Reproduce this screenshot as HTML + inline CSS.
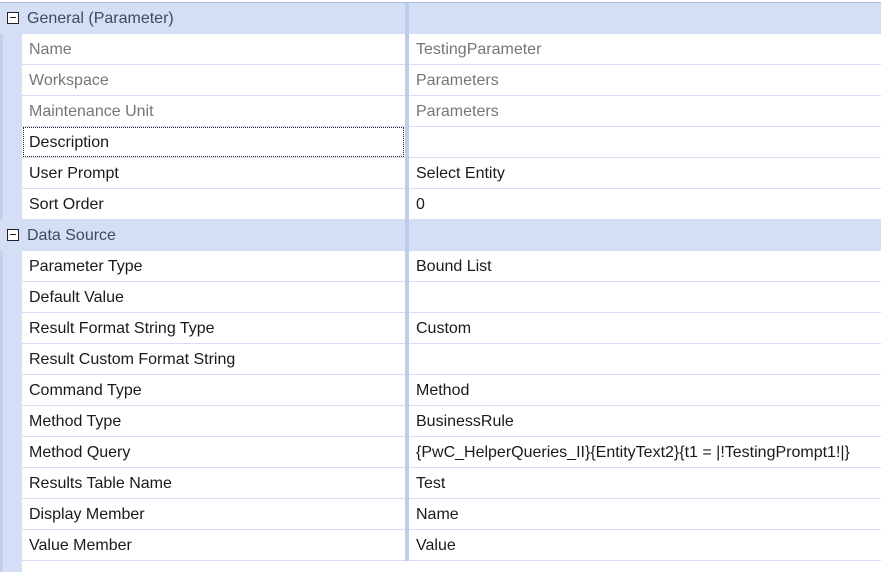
<!DOCTYPE html>
<html><head><style>
body{margin:0;width:881px;height:572px;background:#fff;font-family:"Liberation Sans",sans-serif;font-size:16px;overflow:hidden;position:relative}
.top{position:absolute;left:0;top:0;width:881px;height:2px;background:#fff;border-bottom:1px solid #a9bde6}
.gut{position:absolute;left:0;top:3px;width:22px;height:569px;background:#d4def4}
.gut2{position:absolute;left:0;top:3px;width:3px;height:569px;background:#c3d1ef}
.row{position:absolute;left:22px;width:859px;height:30px;border-bottom:1px solid #d4def4;background:#fff}
.row.h{left:0;width:881px;background:#d4def4;border-bottom:1px solid #d4def4}
.n{position:absolute;left:7px;top:7px;color:#1a1a1a;white-space:nowrap}
.v{position:absolute;left:394px;top:7px;color:#1a1a1a;white-space:nowrap}
.g{color:#767676}
.h .n{left:27px;color:#3e4a60}
.box{position:absolute;left:7px;top:9px;width:10px;height:10px;border:1px solid #222;background:#fff}
.box:after{content:"";position:absolute;left:2px;top:4px;width:6px;height:1px;background:#222}
.split{position:absolute;left:405px;top:3px;width:4px;height:558px;background:#bfcdea}
.dot{position:absolute;left:1px;top:0;width:379px;height:28px;border:1px dotted #222}
</style></head><body>
<div class="top"></div><div class="gut"></div><div class="gut2"></div>
<div class="row h" style="top:3px"><div class="box"></div><div class="n">General (Parameter)</div></div>
<div class="row" style="top:34px"><div class="n g">Name</div><div class="v g">TestingParameter</div></div>
<div class="row" style="top:65px"><div class="n g">Workspace</div><div class="v g">Parameters</div></div>
<div class="row" style="top:96px"><div class="n g">Maintenance Unit</div><div class="v g">Parameters</div></div>
<div class="row" style="top:127px"><div class="dot"></div><div class="n">Description</div><div class="v"></div></div>
<div class="row" style="top:158px"><div class="n">User Prompt</div><div class="v">Select Entity</div></div>
<div class="row" style="top:189px"><div class="n">Sort Order</div><div class="v">0</div></div>
<div class="row h" style="top:220px"><div class="box"></div><div class="n">Data Source</div></div>
<div class="row" style="top:251px"><div class="n">Parameter Type</div><div class="v">Bound List</div></div>
<div class="row" style="top:282px"><div class="n">Default Value</div><div class="v"></div></div>
<div class="row" style="top:313px"><div class="n">Result Format String Type</div><div class="v">Custom</div></div>
<div class="row" style="top:344px"><div class="n">Result Custom Format String</div><div class="v"></div></div>
<div class="row" style="top:375px"><div class="n">Command Type</div><div class="v">Method</div></div>
<div class="row" style="top:406px"><div class="n">Method Type</div><div class="v">BusinessRule</div></div>
<div class="row" style="top:437px"><div class="n">Method Query</div><div class="v">{PwC_HelperQueries_II}{EntityText2}{t1 = |!TestingPrompt1!|}</div></div>
<div class="row" style="top:468px"><div class="n">Results Table Name</div><div class="v">Test</div></div>
<div class="row" style="top:499px"><div class="n">Display Member</div><div class="v">Name</div></div>
<div class="row" style="top:530px"><div class="n">Value Member</div><div class="v">Value</div></div>
<div class="split"></div>
</body></html>
